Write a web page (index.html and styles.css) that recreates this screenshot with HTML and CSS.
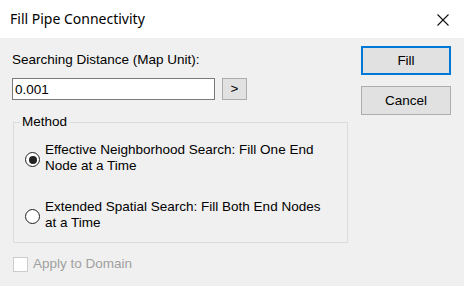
FILE: index.html
```html
<!DOCTYPE html>
<html lang="en">
<head>
  <meta charset="UTF-8" />
  <title>Fill Pipe Connectivity</title>
  <link rel="stylesheet" href="styles.css">
</head>
<body>
  <div class="dialog">
    <div class="titlebar">
      <span class="title">Fill Pipe Connectivity</span>
      <svg class="close" width="12" height="12" viewBox="0 0 12 12">
        <path d="M0.5 0.5 L11.5 11.5 M11.5 0.5 L0.5 11.5" stroke="#111" stroke-width="1.1" fill="none"/>
      </svg>
    </div>

    <div class="content">
      <div class="main">
        <div class="label">Searching Distance (Map Unit):</div>
        <div class="distance-row">
          <input class="textbox" type="text" value="0.001">
          <button class="small-btn">&gt;</button>
        </div>

        <fieldset class="group">
          <legend>Method</legend>
          <label class="choice">
            <input type="radio" name="method" checked>
            <span class="choice-text">Effective Neighborhood Search: Fill One End Node at a Time</span>
          </label>
          <label class="choice second">
            <input type="radio" name="method">
            <span class="choice-text">Extended Spatial Search: Fill Both End Nodes at a Time</span>
          </label>
        </fieldset>

        <label class="check disabled">
          <input type="checkbox" disabled>
          <span>Apply to Domain</span>
        </label>
      </div>

      <div class="side">
        <button class="btn default">Fill</button>
        <button class="btn">Cancel</button>
      </div>
    </div>
  </div>
</body>
</html>
```

FILE: styles.css
```css
* {
  box-sizing: border-box;
  margin: 0;
  padding: 0;
}
html, body {
  width: 100%;
  height: 100%;
}
body {
  background: #f0f0f0;
  font-family: "Liberation Sans", Arial, sans-serif;
  font-size: 13.5px;
  line-height: 16px;
  color: #000;
}
.dialog {
  width: 464px;
  height: 286px;
  background: #f0f0f0;
  overflow: hidden;
}
.titlebar {
  height: 38px;
  background: #fff;
  display: flex;
  align-items: center;
  justify-content: space-between;
  padding: 0 15px 0 10px;
}
.title {
  font-family: "Noto Sans", sans-serif;
  font-size: 14px;
  color: #000;
  margin-top: -1px;
}
.close {
  display: block;
  margin-top: 1px;
}

.content {
  display: flex;
  gap: 13px;
  padding: 8px 13px 0 12px;
}
.main {
  width: 336px;
  padding-top: 6px;
}
.side {
  width: 90px;
  display: flex;
  flex-direction: column;
  gap: 11px;
}

.distance-row {
  display: flex;
  gap: 7px;
  margin-top: 10px;
}
.textbox {
  width: 203px;
  height: 22px;
  border: 1px solid #7a7a7a;
  background: #fff;
  font: inherit;
  padding: 0 2px;
  outline: none;
}
.small-btn {
  width: 25px;
  height: 22px;
  border: 1px solid #adadad;
  background: #e1e1e1;
  font: inherit;
  color: #000;
}

.btn {
  height: 29px;
  border: 1px solid #adadad;
  background: #e1e1e1;
  font: inherit;
  color: #000;
}
.btn.default {
  border: 2px solid #0078d7;
}

.group {
  margin: 14px 0 0 1px;
  width: 335px;
  border: 1px solid #dcdcdc;
  padding: 12px 0 11px 6px;
}
.group legend {
  padding: 0 2px;
  line-height: 16px;
}
.choice {
  display: flex;
  align-items: center;
}
.choice.second {
  margin-top: 25px;
}
.choice input {
  appearance: none;
  width: 15px;
  height: 15px;
  border: 1.6px solid #222;
  border-radius: 50%;
  background: #fff;
  margin: 3px 5px 0 5px;
  flex: none;
  display: grid;
  place-content: center;
}
.choice input:checked::after {
  content: "";
  width: 8px;
  height: 8px;
  border-radius: 50%;
  background: #222;
}
.choice-text {
  width: 278px;
}

.check {
  display: flex;
  align-items: center;
  gap: 5px;
  margin: 13px 0 0 1px;
}
.check input {
  appearance: none;
  width: 15px;
  height: 15px;
  border: 1px solid #cccccc;
  background: #fff;
}
.check.disabled span {
  color: #a0a0a0;
}
```
